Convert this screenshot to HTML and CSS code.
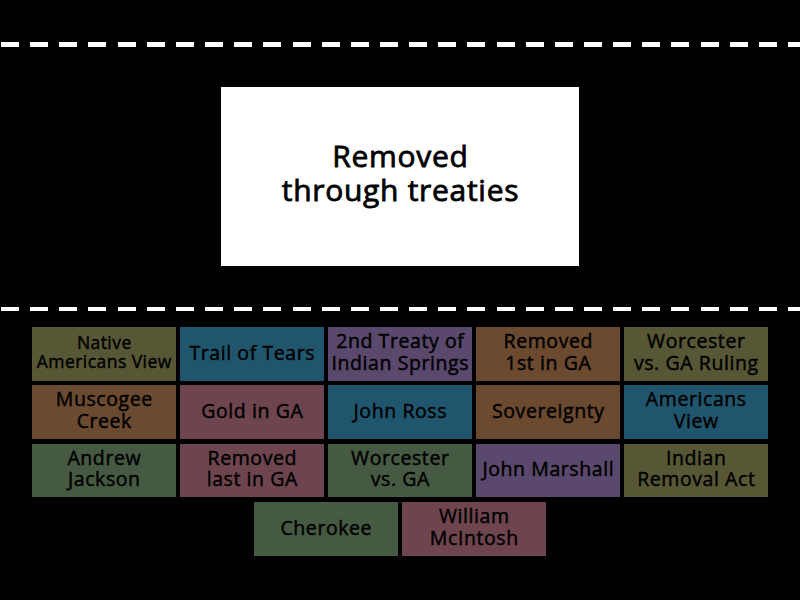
FILE: index.html
```html
<!DOCTYPE html>
<html lang="en">
<head>
	<title>Speaking Cards</title>
	<meta charset="utf-8">
	<meta name="viewport" content="width=device-width, initial-scale=1">

	<link rel="stylesheet" href="styles.css">
</head>
<body>

	<svg class="dashes dashes-top" viewBox="0 0 800 5" aria-hidden="true">
		<line x1="1" y1="2.5" x2="800" y2="2.5"/>
	</svg>

	<main class="stage">
		<h1 class="card"><span>Removed<br>through treaties</span></h1>
	</main>

	<svg class="dashes dashes-bottom" viewBox="0 0 800 4" aria-hidden="true">
		<line x1="1" y1="2" x2="800" y2="2"/>
	</svg>

	<div class="tiles">
		<button class="tile olive small">Native<br>Americans View</button>
		<button class="tile blue">Trail of Tears</button>
		<button class="tile purple">2nd Treaty of<br>Indian Springs</button>
		<button class="tile brown">Removed<br>1st in GA</button>
		<button class="tile olive">Worcester<br>vs. GA Ruling</button>
		<button class="tile brown">Muscogee<br>Creek</button>
		<button class="tile rose">Gold in GA</button>
		<button class="tile blue">John Ross</button>
		<button class="tile brown">Sovereignty</button>
		<button class="tile blue">Americans<br>View</button>
		<button class="tile green">Andrew<br>Jackson</button>
		<button class="tile rose">Removed<br>last in GA</button>
		<button class="tile green">Worcester<br>vs. GA</button>
		<button class="tile purple">John Marshall</button>
		<button class="tile olive">Indian<br>Removal Act</button>
		<button class="tile green">Cherokee</button>
		<button class="tile rose">William<br>McIntosh</button>
	</div>

</body>
</html>
```
FILE: styles.css
```css
*,
*:before,
*:after {
	box-sizing: border-box;
}

body {
	background-color: #000000;
	display: flex;
	flex-direction: column;
	font-family: "Open Sans", "Noto Sans", sans-serif;
	font-weight: 400;
	height: 600px;
	margin: 0;
	overflow: hidden;
	padding-top: 42px;
	width: 800px;
}

/**
 * Dashed lines above and below the card
 */
.dashes {
	display: block;
	flex: none;
	shape-rendering: crispEdges;
	width: 800px;
}

.dashes line {
	stroke: #ffffff;
	stroke-dasharray: 18 11.15;
}

.dashes-top {
	height: 5px;
	stroke-width: 5;
}

.dashes-bottom {
	height: 4px;
	stroke-width: 4;
}

.stage {
	display: flex;
	flex: none;
	height: 260px;
	justify-content: center;
	padding-top: 40px;
}

.card {
	-webkit-text-stroke: 0.8px #000000;
	align-items: center;
	background-color: #ffffff;
	color: #000000;
	display: flex;
	font-size: 30px;
	font-weight: 400;
	height: 179px;
	justify-content: center;
	letter-spacing: 0.7px;
	line-height: 34px;
	margin: 0;
	padding: 0 0 7px 1px;
	text-align: center;
	width: 358px;
}

/**
 * Answer tiles
 */
.tiles {
	display: flex;
	flex-wrap: wrap;
	gap: 4.63px 4px;
	justify-content: center;
	padding: 16px 32px 0;
}

.tile {
	-webkit-text-stroke: 0.45px #000000;
	border: 0;
	color: #000000;
	font: inherit;
	font-size: 19.5px;
	height: 53.7px;
	letter-spacing: 0.58px;
	line-height: 21.7px;
	padding: 0 0 2.5px 0.6px;
	text-align: center;
	white-space: nowrap;
	width: 144px;
}

.tile:has(br) {
	padding-bottom: 4px;
}

.tile.small {
	font-size: 17.5px;
	letter-spacing: 0.45px;
	line-height: 19px;
}

.olive {
	background-color: #585735;
}

.blue {
	background-color: #20566d;
}

.purple {
	background-color: #5a496d;
}

.brown {
	background-color: #6b4a30;
}

.rose {
	background-color: #6e454e;
}

.green {
	background-color: #465942;
}
```
